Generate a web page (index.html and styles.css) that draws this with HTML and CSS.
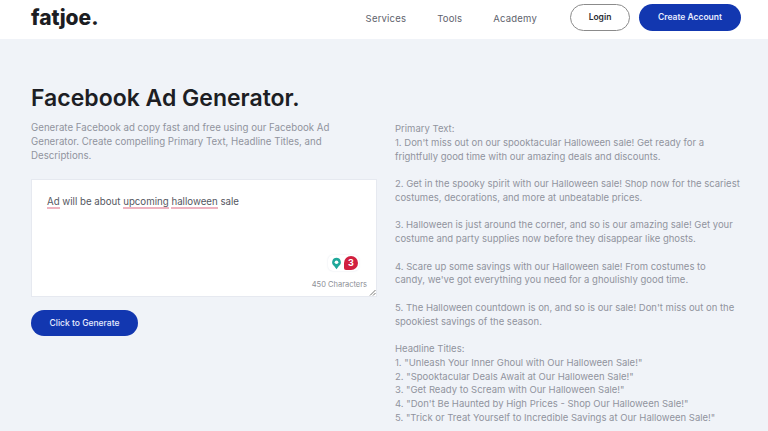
FILE: index.html
```html
<!DOCTYPE html>
<html lang="en">
  <head>
    <meta charset="UTF-8" />
    <meta name="viewport" content="width=device-width, initial-scale=1.0" />
    <title>Facebook Ad Generator - fatjoe</title>
    <link rel="stylesheet" href="styles.css">
  </head>
  <body>
    <header class="site-header">
      <div class="logo">fatjoe.</div>
      <nav class="nav-links">
        <a>Services</a>
        <a>Tools</a>
        <a>Academy</a>
      </nav>
      <div class="nav-buttons">
        <a class="btn btn-outline">Login</a>
        <a class="btn btn-primary btn-create">Create Account</a>
      </div>
    </header>
    <main class="container">
      <section class="form-col">
        <h1>Facebook Ad Generator.</h1>
        <p class="intro">Generate Facebook ad copy fast and free using our Facebook Ad Generator. Create compelling Primary Text, Headline Titles, and Descriptions.</p>
        <div class="input-box">
          <p class="input-text"><span class="typo">Ad</span> will be about <span class="typo">upcoming</span> <span class="typo">halloween</span> sale</p>
          <div class="grammar-badge">
            <svg class="bulb" viewBox="0 0 12 14" width="11" height="13">
              <path d="M6 .8a4.8 4.8 0 0 0-2.6 8.8L6 13.2l2.6-3.6A4.8 4.8 0 0 0 6 .8z" fill="#1fa89a"/>
              <circle cx="6" cy="5.6" r="2" fill="#fff"/>
            </svg>
            <span class="count">3</span>
          </div>
          <div class="char-count">450 Characters</div>
          <svg class="resize" viewBox="0 0 7 7" width="7" height="7">
            <path d="M1 6.5 6.5 1M4 6.5 6.5 4" stroke="#777" stroke-width="1" fill="none"/>
          </svg>
        </div>
        <a class="btn btn-primary btn-generate">Click to Generate</a>
      </section>
      <section class="result-col">
        <p>Primary Text:<br>1. Don't miss out on our spooktacular Halloween sale! Get ready for a frightfully good time with our amazing deals and discounts.</p>
        <p>2. Get in the spooky spirit with our Halloween sale! Shop now for the scariest costumes, decorations, and more at unbeatable prices.</p>
        <p>3. Halloween is just around the corner, and so is our amazing sale! Get your costume and party supplies now before they disappear like ghosts.</p>
        <p>4. Scare up some savings with our Halloween sale! From costumes to<br>candy, we've got everything you need for a ghoulishly good time.</p>
        <p>5. The Halloween countdown is on, and so is our sale! Don't miss out on the spookiest savings of the season.</p>
        <p>Headline Titles:<br>1. "Unleash Your Inner Ghoul with Our Halloween Sale!"<br>2. "Spooktacular Deals Await at Our Halloween Sale!"<br>3. "Get Ready to Scream with Our Halloween Sale!"<br>4. "Don't Be Haunted by High Prices - Shop Our Halloween Sale!"<br>5. "Trick or Treat Yourself to Incredible Savings at Our Halloween Sale!"</p>
      </section>
    </main>
  </body>
</html>
```

FILE: styles.css
```css
html,
body {
  height: 431px;
  overflow: hidden;
}
body {
  font-family: Inter, "Open Sans", sans-serif;
  margin: 0;
  padding: 0;
  background: #f0f3f8;
  color: #90939e;
}
.site-header {
  height: 39px;
  background: #fff;
  display: flex;
  align-items: center;
  padding: 0 27px 0 31px;
}
.logo {
  font-size: 21px;
  font-weight: 800;
  color: #1c1d22;
  margin-top: -4px;
}
.nav-links {
  display: flex;
  gap: 31px;
  margin-left: auto;
  margin-right: 33px;
  margin-top: -3px;
  font-size: 9.5px;
  letter-spacing: 0.2px;
  color: #60636d;
}
.nav-buttons {
  display: flex;
  gap: 9px;
  margin-top: -5px;
}
.btn {
  display: flex;
  align-items: center;
  justify-content: center;
  border-radius: 14px;
  font-size: 8.5px;
  font-weight: 600;
  box-sizing: border-box;
}
.btn-outline {
  width: 60px;
  height: 27px;
  border: 1px solid #8b8b8b;
  background: #fff;
  color: #2a2c33;
}
.btn-primary {
  background: #1237b0;
  color: #e8edff;
}
.btn-create {
  width: 102px;
  height: 27px;
}
.container {
  display: grid;
  grid-template-columns: 346px 350px;
  gap: 18px;
  padding: 0 0 0 31px;
}
h1 {
  margin: 45px 0 0;
  font-size: 23px;
  line-height: 28px;
  font-weight: 600;
  color: #1d1e24;
}
.intro {
  margin: 9px 0 0;
  font-size: 9.7px;
  line-height: 13.8px;
}
.input-box {
  position: relative;
  box-sizing: border-box;
  height: 118px;
  margin-top: 17px;
  background: #fff;
  border: 1px solid #e6e9f0;
  padding: 15px 15px 0;
}
.input-text {
  margin: 0;
  font-size: 9.7px;
  line-height: 14px;
  color: #55575f;
}
.typo {
  border-bottom: 2px solid #efb3c0;
}
.grammar-badge {
  position: absolute;
  top: 75px;
  right: 17px;
  display: flex;
  align-items: center;
  gap: 2px;
  padding: 1px 1px 1px 3px;
  background: #fff;
  border-radius: 5px;
  box-shadow: 0 0 2px #dfe3ea;
}
.count {
  width: 14px;
  height: 14px;
  border-radius: 50% 50% 50% 2px;
  background: #d11f3f;
  color: #fff;
  font-size: 9px;
  font-weight: 700;
  line-height: 14px;
  text-align: center;
}
.char-count {
  position: absolute;
  right: 9px;
  bottom: 7px;
  font-size: 7.5px;
  color: #8d8f96;
}
.resize {
  position: absolute;
  right: 0;
  bottom: 0;
}
.btn-generate {
  width: 107px;
  height: 26px;
  margin-top: 13px;
  font-size: 8.5px;
  font-weight: 500;
}
.result-col {
  padding-top: 83px;
  font-size: 9.5px;
  line-height: 13.75px;
}
.result-col p {
  margin: 0 0 13.75px;
}
```
